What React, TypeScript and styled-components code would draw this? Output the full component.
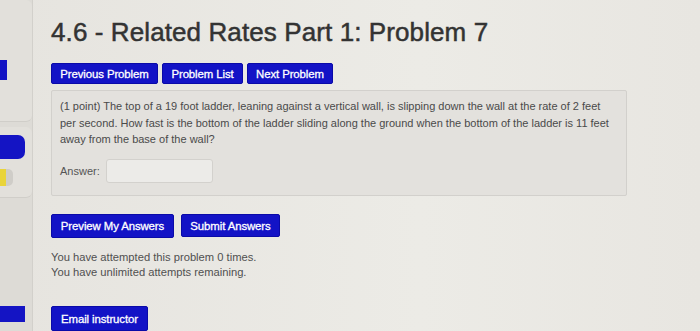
import React from "react";
import styled, { createGlobalStyle, css } from "styled-components";

const GlobalStyle = createGlobalStyle`
  html, body {
    margin: 0;
    padding: 0;
    background: #e9e7e2;
  }
  body {
    font-family: "Liberation Sans", Arial, sans-serif;
    overflow: hidden;
  }
`;

const Page = styled.div`
  display: flex;
  width: 700px;
  height: 331px;
  overflow: hidden;
  background: linear-gradient(90deg, #e6e4df 0%, #ecebe6 60%, #e8e6e1 100%);
`;

const Sidebar = styled.div`
  width: 32px;
  flex-shrink: 0;
  display: flex;
  flex-direction: column;
  background: #dddbd6;
  border-right: 1px solid #d2d0cb;
`;

const SidePanel = styled.div<{ $h: number; $top?: number }>(
  ({ $h, $top = 0 }) => css`
    height: ${$h}px;
    margin-top: ${$top}px;
    background: #e2e0db;
    border-bottom: 1px solid #d0cec9;
    border-top-right-radius: 6px;
    border-bottom-right-radius: 6px;
    display: flex;
    flex-direction: column;
  `
);

const SideBlue = styled.div<{ $w: number; $h: number; $top: number; $round?: boolean }>(
  ({ $w, $h, $top, $round }) => css`
    width: ${$w}px;
    height: ${$h}px;
    margin-top: ${$top}px;
    background: #1414c4;
    border-radius: ${$round ? "0 7px 7px 0" : "0"};
  `
);

const Toggle = styled.div`
  margin-top: 10px;
  width: 13px;
  height: 17px;
  border-radius: 0 5px 5px 0;
  background: linear-gradient(90deg, #e9d43a 0 45%, #cfcdc8 45% 100%);
`;

const Main = styled.div`
  flex: 1;
  padding: 17px 0 0 18px;
  display: flex;
  flex-direction: column;
  color: #555;
`;

const Title = styled.h1`
  margin: 0;
  font-size: 26px;
  font-weight: 400;
  color: #333;
  line-height: 31px;
  letter-spacing: 0.1px;
  -webkit-text-stroke: 0.5px #333;
`;

const ButtonRow = styled.div<{ $top: number; $gap: number }>(
  ({ $top, $gap }) => css`
    display: flex;
    gap: ${$gap}px;
    margin-top: ${$top}px;
  `
);

const Button = styled.button<{ $w: number; $h: number }>(
  ({ $w, $h }) => css`
    width: ${$w}px;
    height: ${$h}px;
    padding: 0;
    border: 1px solid #0a0aa8;
    border-radius: 2px;
    background: #1313c6;
    color: #fff;
    font-family: "Liberation Sans", Arial, sans-serif;
    font-size: 11.4px;
    font-weight: 400;
    -webkit-text-stroke: 0.3px #fff;
    letter-spacing: -0.1px;
  `
);

const ProblemBox = styled.div`
  margin-top: 6px;
  width: 557px;
  height: 89px;
  padding: 7px 9px 8px 8px;
  background: #e3e1dd;
  border: 1px solid #d2d0cc;
  border-radius: 2px;
`;

const ProblemText = styled.p`
  margin: 0;
  font-size: 11px;
  line-height: 16.5px;
  color: #4a4a4a;
  white-space: nowrap;
`;

const AnswerRow = styled.div`
  display: flex;
  align-items: center;
  gap: 6px;
  margin-top: 11px;
  font-size: 11px;
  color: #555;
`;

const AnswerInput = styled.div`
  width: 105px;
  height: 22px;
  background: #ecebe8;
  border: 1px solid #d3d1cd;
  border-radius: 3px;
`;

const Attempts = styled.div`
  margin-top: 12px;
  font-size: 11.2px;
  line-height: 14.5px;
  color: #505050;
`;

export default function App() {
  return (
    <>
      <GlobalStyle />
      <Page>
        <Sidebar>
          <SidePanel $h={121}>
            <SideBlue $w={7} $h={20} $top={60} />
          </SidePanel>
          <SidePanel $h={70} $top={5}>
            <SideBlue $w={25} $h={24} $top={8} $round />
            <Toggle />
          </SidePanel>
          <SideBlue $w={25} $h={16} $top={108} />
        </Sidebar>
        <Main>
          <Title>4.6 - Related Rates Part 1: Problem 7</Title>
          <ButtonRow $top={15} $gap={4}>
            <Button $w={107} $h={21}>Previous Problem</Button>
            <Button $w={81} $h={21}>Problem List</Button>
            <Button $w={86} $h={21}>Next Problem</Button>
          </ButtonRow>
          <ProblemBox>
            <ProblemText>
              (1 point) The top of a 19 foot ladder, leaning against a vertical wall, is slipping down the wall at the rate of 2 feet
              <br />
              per second. How fast is the bottom of the ladder sliding along the ground when the bottom of the ladder is 11 feet
              <br />
              away from the base of the wall?
            </ProblemText>
            <AnswerRow>
              <span>Answer:</span>
              <AnswerInput />
            </AnswerRow>
          </ProblemBox>
          <ButtonRow $top={18} $gap={7}>
            <Button $w={123} $h={24}>Preview My Answers</Button>
            <Button $w={99} $h={23}>Submit Answers</Button>
          </ButtonRow>
          <Attempts>
            You have attempted this problem 0 times.
            <br />
            You have unlimited attempts remaining.
          </Attempts>
          <ButtonRow $top={27} $gap={0}>
            <Button $w={97} $h={25}>Email instructor</Button>
          </ButtonRow>
        </Main>
      </Page>
    </>
  );
}
